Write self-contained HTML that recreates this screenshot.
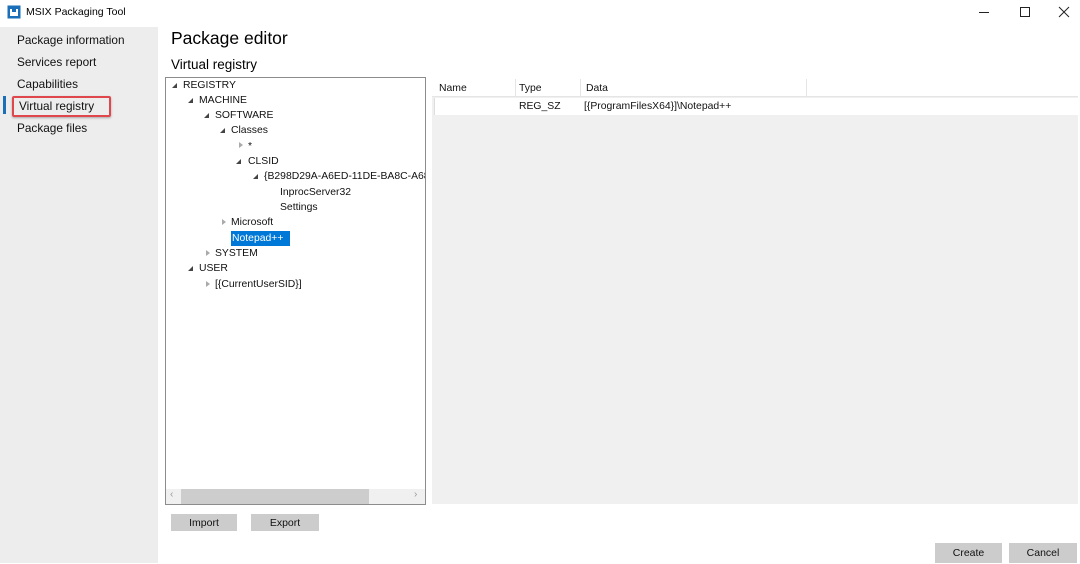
<!DOCTYPE html>
<html><head><style>
*{margin:0;padding:0;box-sizing:border-box}
body{width:1080px;height:563px;background:#fff;font-family:"Segoe UI","Liberation Sans",sans-serif;font-size:12px;color:#000;position:relative;overflow:hidden}
.a{position:absolute;white-space:nowrap}
.side{position:absolute;left:0;top:27px;width:158px;height:536px;background:#ededed}
.nav{position:absolute;left:17px;font-size:11.8px;color:#111}
.tri{position:absolute;width:0;height:0}
.dn{border-left:5px solid transparent;border-bottom:5px solid #444}
.rt{border-top:3.5px solid transparent;border-bottom:3.5px solid transparent;border-left:4px solid #aaa}
.t{position:absolute;font-size:10.4px;line-height:14px;color:#111;white-space:nowrap}
.btn{position:absolute;background:#cccccc;font-size:10.5px;text-align:center;color:#111}
</style></head><body>
<svg class="a" style="left:7px;top:5px" width="14" height="14" viewBox="0 0 14 14"><rect x="0.5" y="0.5" width="13" height="13" fill="#1a6fb8"/><rect x="3" y="4" width="8" height="7" fill="#fff"/><rect x="5" y="4" width="4" height="3" fill="#1a6fb8"/></svg>
<div class="a" style="left:26px;top:6px;font-size:10.5px">MSIX Packaging Tool</div>
<svg class="a" style="left:975px;top:5px" width="95" height="14"><line x1="4" y1="7.5" x2="14" y2="7.5" stroke="#222"/><rect x="45.5" y="2.5" width="9" height="9" fill="none" stroke="#222"/><path d="M84 2L94 12M94 2L84 12" stroke="#222"/></svg>
<div class="side"></div>
<div class="nav a" style="top:33px">Package information</div>
<div class="nav a" style="top:55px">Services report</div>
<div class="nav a" style="top:77px">Capabilities</div>
<div class="a" style="left:3px;top:96px;width:3px;height:18px;background:#1a6fb8"></div>
<div class="a" style="left:12px;top:96px;width:99px;height:21px;border:2px solid #e0474c;border-radius:2px;box-shadow:0 1px 2px rgba(0,0,0,.3)"></div>
<div class="nav a" style="top:99px;left:19px">Virtual registry</div>
<div class="nav a" style="top:121px">Package files</div>
<div class="a" style="left:171px;top:28px;font-size:17.5px">Package editor</div>
<div class="a" style="left:171px;top:57px;font-size:13.5px">Virtual registry</div>
<div class="a" style="left:165px;top:77px;width:261px;height:428px;border:1px solid #8c8c8c;background:#fff"></div>
<div class="a" style="left:166px;top:489px;width:259px;height:15px;background:#f0f0f0"></div>
<div class="a" style="left:181px;top:489px;width:188px;height:15px;background:#cdcdcd"></div>
<div class="a" style="left:170px;top:489px;font-size:10px;color:#999">‹</div>
<div class="a" style="left:414px;top:489px;font-size:10px;color:#999">›</div>
<div class="a" style="left:231px;top:231px;width:59px;height:15px;background:#0078d7"></div>
<div class="tri dn" style="left:172px;top:83px"></div><div class="t" style="left:183px;top:79px">REGISTRY</div>
<div class="tri dn" style="left:188px;top:98px"></div><div class="t" style="left:199px;top:94px">MACHINE</div>
<div class="tri dn" style="left:204px;top:113px"></div><div class="t" style="left:215px;top:109px">SOFTWARE</div>
<div class="tri dn" style="left:220px;top:128px"></div><div class="t" style="left:231px;top:124px">Classes</div>
<div class="tri rt" style="left:239px;top:142px"></div><div class="t" style="left:248px;top:140px">*</div>
<div class="tri dn" style="left:236px;top:159px"></div><div class="t" style="left:248px;top:155px">CLSID</div>
<div class="tri dn" style="left:253px;top:174px"></div><div class="t" style="left:264px;top:170px;width:161px;overflow:hidden">{B298D29A-A6ED-11DE-BA8C-A68E</div>
<div class="t" style="left:280px;top:186px">InprocServer32</div>
<div class="t" style="left:280px;top:201px">Settings</div>
<div class="tri rt" style="left:222px;top:219px"></div><div class="t" style="left:231px;top:216px">Microsoft</div>
<div class="t" style="left:232px;top:232px;color:#fff">Notepad++</div>
<div class="tri rt" style="left:206px;top:250px"></div><div class="t" style="left:215px;top:247px">SYSTEM</div>
<div class="tri dn" style="left:188px;top:266px"></div><div class="t" style="left:199px;top:262px">USER</div>
<div class="tri rt" style="left:206px;top:281px"></div><div class="t" style="left:215px;top:278px">[{CurrentUserSID}]</div>
<div class="a" style="left:432px;top:77px;width:646px;height:427px;background:#f0f0f0"></div>
<div class="a" style="left:432px;top:77px;width:646px;height:20px;background:#fff;border-bottom:1px solid #e5e5e5"></div>
<div class="a" style="left:515px;top:79px;width:1px;height:17px;background:#e5e5e5"></div>
<div class="a" style="left:580px;top:79px;width:1px;height:17px;background:#e5e5e5"></div>
<div class="a" style="left:806px;top:79px;width:1px;height:17px;background:#e5e5e5"></div>
<div class="t" style="left:439px;top:82px">Name</div>
<div class="t" style="left:519px;top:82px">Type</div>
<div class="t" style="left:586px;top:82px">Data</div>
<div class="a" style="left:434px;top:98px;width:644px;height:17px;background:#fff"></div>
<div class="a" style="left:434px;top:98px;width:1px;height:17px;background:#ddd"></div>
<div class="t" style="left:519px;top:100px">REG_SZ</div>
<div class="t" style="left:584px;top:100px">[{ProgramFilesX64}]\Notepad++</div>
<div class="btn" style="left:171px;top:514px;width:66px;height:17px;line-height:18px">Import</div>
<div class="btn" style="left:251px;top:514px;width:68px;height:17px;line-height:18px">Export</div>
<div class="btn" style="left:935px;top:543px;width:67px;height:20px;line-height:21px">Create</div>
<div class="btn" style="left:1009px;top:543px;width:68px;height:20px;line-height:21px">Cancel</div>
</body></html>
